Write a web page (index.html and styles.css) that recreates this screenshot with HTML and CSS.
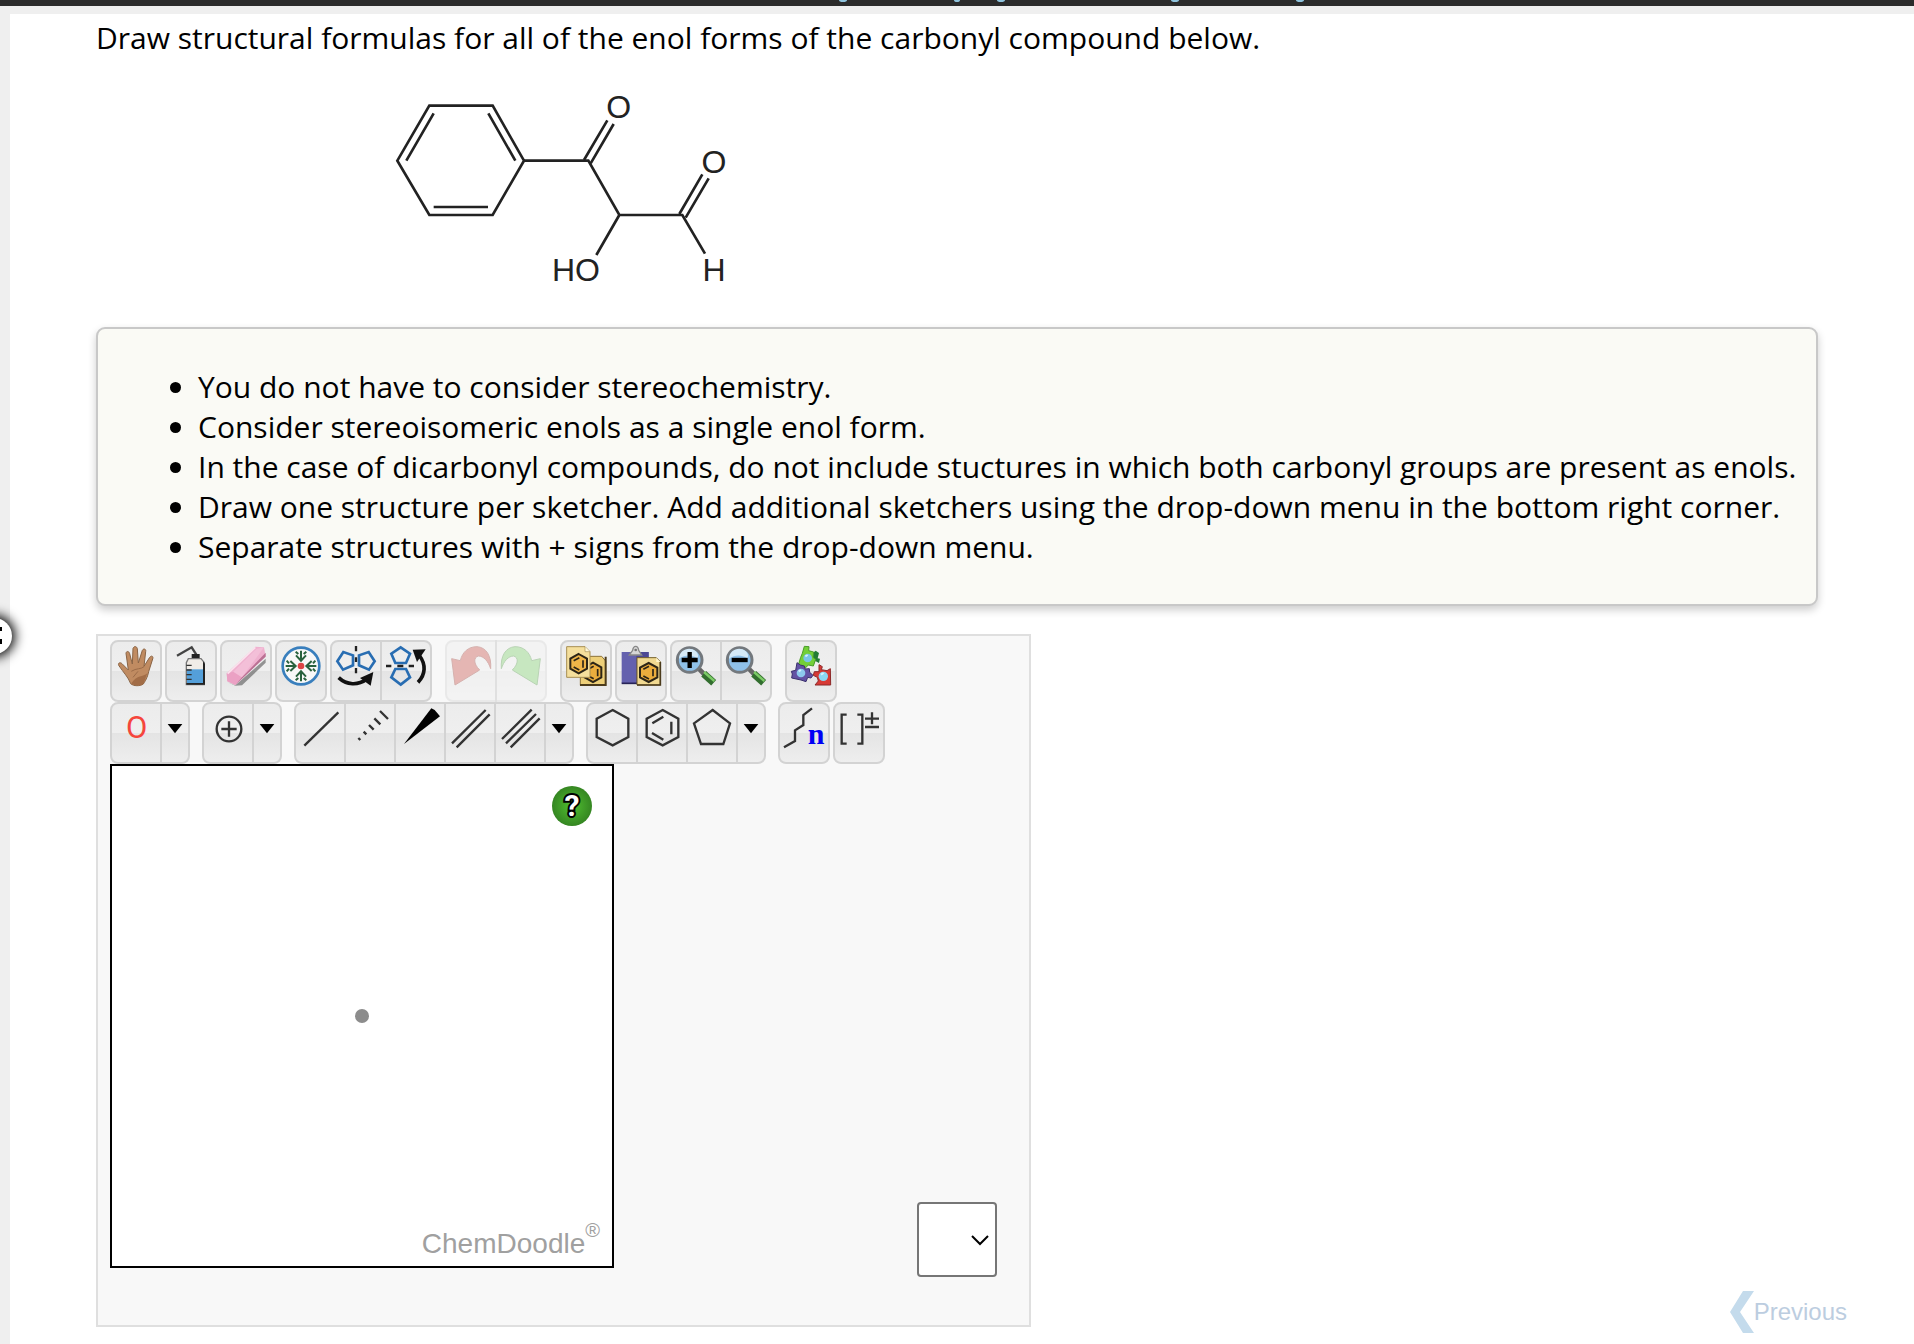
FILE: index.html
```html
<!DOCTYPE html>
<html lang="en">
<head>
    <meta charset="UTF-8">
    <meta name="viewport" content="width=device-width, initial-scale=1.0">
    <title>Enol forms</title>
    <link rel="stylesheet" href="styles.css">
</head>
<body>
    <header class="topbar">
        <svg width="1914" height="4" fill="#8fc3dd">
            <ellipse cx="843" cy="0" rx="4" ry="2"/>
            <ellipse cx="957" cy="0" rx="3" ry="2"/>
            <ellipse cx="1001" cy="0" rx="4" ry="2"/>
            <ellipse cx="1175" cy="0" rx="4" ry="2"/>
            <ellipse cx="1300" cy="0" rx="4" ry="2"/>
        </svg>
    </header>

    <button class="drawer-handle" aria-label="Open panel">
        <svg width="36" height="36"><path d="M20 9h6v4h-6zM20 21h6v5h-6z"/></svg>
    </button>

    <main class="page">
        <p class="question">Draw structural formulas for all of the enol forms of the carbonyl compound below.</p>

        <svg class="molecule" viewBox="0 0 1110 660" fill="none" stroke="#222" stroke-width="8">
            <path d="M148 77H338L432 242L338 405H148L52 242Z"/>
            <path d="M161 100L79 242M325 100L406 242M161 381H324"/>
            <path d="M432 242H625L718 405H907L975 521M718 405L649 525"/>
            <path d="M612 240L682 121M632 250L701 132M898 402L967 283M917 413L986 295"/>
            <g class="atom">
                <text x="716" y="115">O</text>
                <text x="1002" y="278">O</text>
                <text x="588" y="604">HO</text>
                <text x="1002" y="604">H</text>
            </g>
        </svg>

        <div class="notice">
            <ul>
                <li>You do not have to consider stereochemistry.</li>
                <li>Consider stereoisomeric enols as a single enol form.</li>
                <li>In the case of dicarbonyl compounds, do not include stuctures in which both carbonyl groups are present as enols.</li>
                <li>Draw one structure per sketcher. Add additional sketchers using the drop-down menu in the bottom right corner.</li>
                <li>Separate structures with + signs from the drop-down menu.</li>
            </ul>
        </div>

        <div class="answer">
            <section class="sketcher">
                <!-- top toolbar: edit tools -->
                <div class="toolbar toolbar-edit">
                    <div class="tools">
                        <button class="tool" aria-label="Move">
                            <svg class="icon" viewBox="0 0 120 120">
                                <path d="M44 113C36 92 24 82 8 58C5 50 13 48 18 53L37 72L30 22C31 14 39 15 41 23L49 54L51 7C54 0 62 0 64 8L67 51L79 13C83 6 91 9 89 17L84 61L101 34C107 27 113 31 110 39L98 77C94 96 88 104 82 114C72 121 53 121 44 113Z" fill="#c08b61" stroke="#8a6445" stroke-width="3"/>
                                <path d="M46 76C60 66 76 70 84 62M51 94L66 76" fill="none" stroke="#9c6c49" stroke-width="3"/>
                                <path d="M46 112C54 120 74 121 82 114L94 82C80 94 64 86 46 112Z" fill="#a26d47"/>
                            </svg>
                        </button>
                        <button class="tool" aria-label="Clear">
                            <svg class="icon" viewBox="0 0 120 120">
                                <path d="M18 29L62 4L76 26" fill="none" stroke="#444" stroke-width="7"/>
                                <path d="M62 24h24v14H62z" fill="#222"/>
                                <path d="M52 38h38l10 12v66H46V50z" fill="#f0ece7" stroke="#777" stroke-width="4"/>
                                <path d="M48 70h50v44H48z" fill="#549fd9"/>
                                <path d="M96 46l6 8v62H46v-5h50z" fill="#222"/>
                                <path d="M46 58h16M46 72h16M46 86h16M46 100h16" stroke="#333" stroke-width="4"/>
                            </svg>
                        </button>
                        <button class="tool" aria-label="Erase">
                            <svg class="icon" viewBox="0 0 120 120">
                                <path d="M4 108L28 118L119 38V50L48 118L28 119Z" fill="#555" opacity=".6"/>
                                <path d="M2 82L88 2L114 4L119 30L28 117L4 106Z" fill="#efb1cf"/>
                                <path d="M2 82L22 77L48 94L28 117L4 106Z" fill="#eba1c4"/>
                                <path d="M22 77L92 8L114 4L48 94Z" fill="#f3bfd8"/>
                                <path d="M48 94L119 20V32L28 117Z" fill="#bb7194"/>
                                <path d="M5 83L88 4" stroke="#fae2ed" stroke-width="5"/>
                            </svg>
                        </button>
                        <button class="tool" aria-label="Center">
                            <svg class="icon" viewBox="0 0 120 120">
                                <circle cx="60" cy="60" r="55" fill="#f8f8f8" stroke="#397fbd" stroke-width="8"/>
                                <g fill="none" stroke="#28613d" stroke-width="6">
                                    <path d="M60 14V42M45 28L60 44L75 28M44 17L52 24M76 17L68 24"/>
                                    <path d="M60 106V78M45 92L60 76L75 92M44 103L52 96M76 103L68 96"/>
                                    <path d="M14 60H42M28 45L44 60L28 75M17 44L24 52M17 76L24 68"/>
                                    <path d="M106 60H78M92 45L76 60L92 75M103 44L96 52M103 76L96 68"/>
                                </g>
                                <circle cx="60" cy="60" r="10" fill="#dc4444"/>
                            </svg>
                        </button>
                        <div class="tool-group">
                            <button class="tool" aria-label="Flip horizontally">
                                <svg class="icon" viewBox="0 0 120 120" fill="none">
                                    <path d="M4 46L22 18L51 28V58L21 71ZM116 46L98 18L69 28V58L99 71Z" stroke="#286db2" stroke-width="8"/>
                                    <path d="M60 0V16M60 34V48M60 66V82" stroke="#222" stroke-width="7"/>
                                    <path d="M8 95C32 118 66 119 92 100" stroke="#111" stroke-width="11"/>
                                    <path d="M72 96L112 78L104 119Z" fill="#111"/>
                                </svg>
                            </button>
                            <button class="tool" aria-label="Flip vertically">
                                <svg class="icon" viewBox="0 0 120 120" fill="none">
                                    <path d="M44 4L72 23L60 51H28L16 23ZM44 116L72 94L60 69H28L16 94Z" stroke="#286db2" stroke-width="8"/>
                                    <path d="M0 60H16M34 60H52M68 60H84" stroke="#222" stroke-width="7"/>
                                    <path d="M96 109C119 86 120 55 101 30" stroke="#111" stroke-width="11"/>
                                    <path d="M80 11L119 10L93 48Z" fill="#111"/>
                                </svg>
                            </button>
                        </div>
                    </div>
                    <div class="tool-group">
                        <button class="tool" disabled aria-label="Undo">
                            <svg class="icon" viewBox="0 0 120 120">
                                <path d="M2 38L28 44C34 18 52 2 78 2C106 4 122 30 119 68C112 46 98 30 82 30C68 34 66 52 86 72L12 117Z" fill="#c9564e" stroke="#a34841" stroke-width="3"/>
                            </svg>
                        </button>
                        <button class="tool" disabled aria-label="Redo">
                            <svg class="icon" viewBox="0 0 120 120">
                                <path d="M118 38L92 44C86 18 68 2 42 2C14 4-2 30 1 68C8 46 22 30 38 30C52 34 54 52 34 72L108 117Z" fill="#80cf6d" stroke="#5b9d50" stroke-width="3"/>
                            </svg>
                        </button>
                    </div>
                    <div class="tools">
                        <button class="tool" aria-label="Copy">
                            <svg class="icon" viewBox="0 0 120 120">
                                <path d="M43 31H107L119 45V118H43Z" fill="#edcf79" stroke="#8c733a" stroke-width="3"/>
                                <path d="M42 117H119V32" fill="none" stroke="#4b3b1c" stroke-width="6"/>
                                <path d="M81 50L106 64V94L81 108L56 94V64Z" fill="#ebad3d" stroke="#2c2517" stroke-width="6"/>
                                <path d="M95 69V91M66 70L83 61M66 89L83 98" stroke="#2c2517" stroke-width="5"/>
                                <path d="M2 2H57L72 17V94H2Z" fill="#f5df9c" stroke="#a88f53" stroke-width="3"/>
                                <path d="M57 2V17H72" fill="#fff8d8" stroke="#a88f53" stroke-width="2"/>
                                <path d="M38 24L63 38V68L38 82L13 68V38Z" fill="#efb548" stroke="#2c2517" stroke-width="6"/>
                                <path d="M51 43V65M23 44L40 35M23 63L40 72" stroke="#2c2517" stroke-width="5"/>
                            </svg>
                        </button>
                        <button class="tool" aria-label="Paste">
                            <svg class="icon" viewBox="0 0 120 120">
                                <path d="M2 18H83V112H2Z" fill="#6461ae"/>
                                <path d="M46 18H83V112H46Z" fill="#4d4894"/>
                                <path d="M2 112H83" stroke="#282457" stroke-width="5"/>
                                <path d="M25 27L35 13C37-3 51-3 53 13L62 27Z" fill="#d6d6d6" stroke="#888" stroke-width="4"/>
                                <circle cx="44" cy="12" r="4" fill="#777"/>
                                <path d="M48 35H106L118 47V117H48Z" fill="#f1d991" stroke="#756029" stroke-width="3"/>
                                <path d="M106 35V48H118" fill="#fff5cb"/>
                                <path d="M48 117H118V48" fill="none" stroke="#4b3b1c" stroke-width="5"/>
                                <path d="M83 51L109 65V94L83 108L57 94V65Z" fill="#ebad3d" stroke="#2c2517" stroke-width="6"/>
                                <path d="M96 69V91M67 70L84 61M67 90L84 99" stroke="#2c2517" stroke-width="5"/>
                            </svg>
                        </button>
                        <div class="tool-group">
                            <button class="tool" aria-label="Zoom in">
                                <svg class="icon" viewBox="0 0 120 120">
                                    <path d="M68 68L87 87" stroke="#666" stroke-width="14"/>
                                    <path d="M83 83L113 110" stroke="#326e2e" stroke-width="22"/>
                                    <path d="M84 78L115 105" stroke="#7ccb66" stroke-width="7"/>
                                    <circle cx="41" cy="42" r="37" fill="#8fc1ea" stroke="#73787d" stroke-width="9"/>
                                    <path d="M9 38C10 14 32 4 50 10C70 20 67 33 64 37C45 25 27 26 9 38Z" fill="#d5eaf8"/>
                                    <path d="M41 18V66M17 42H65" stroke="#000" stroke-width="13"/>
                                </svg>
                            </button>
                            <button class="tool" aria-label="Zoom out">
                                <svg class="icon" viewBox="0 0 120 120">
                                    <path d="M68 68L87 87" stroke="#666" stroke-width="14"/>
                                    <path d="M83 83L113 110" stroke="#326e2e" stroke-width="22"/>
                                    <path d="M84 78L115 105" stroke="#7ccb66" stroke-width="7"/>
                                    <circle cx="41" cy="42" r="37" fill="#8fc1ea" stroke="#73787d" stroke-width="9"/>
                                    <path d="M9 38C10 14 32 4 50 10C70 20 67 33 64 37C45 25 27 26 9 38Z" fill="#d5eaf8"/>
                                    <path d="M17 42H65" stroke="#000" stroke-width="13"/>
                                </svg>
                            </button>
                        </div>
                    </div>
                    <button class="tool" aria-label="Templates">
                        <svg class="icon" viewBox="0 0 120 120">
                            <path d="M54 14L66 20L74 14L84 21L80 37L87 38L84 51L73 45L67 58L54 54Z" fill="#237c35"/>
                            <path d="M40 1L54 2L53 14L68 18L66 34L74 40L67 60L52 57L43 66L35 60L22 57L29 34L34 22Z" fill="#73cf38" stroke="#4b9d2b" stroke-width="3"/>
                            <path d="M18 50L28 57L40 60L42 69L55 68L56 79L66 88L60 96L50 94L45 107L30 102L2 96L4 84L1 76L14 73Z" fill="#6352a4" stroke="#3b316d" stroke-width="3"/>
                            <path d="M84 56L94 62L91 71L108 74L118 68L119 117H72L82 105L79 94L67 88L70 77L84 77Z" fill="#d73a35" stroke="#8c2929" stroke-width="3"/>
                            <circle cx="50" cy="36" r="13" fill="#79c4e7"/>
                            <circle cx="30" cy="81" r="13" fill="#8dc9ed"/>
                            <circle cx="97" cy="91" r="14" fill="#8bd7f3"/>
                            <path d="M43 31l7-4M23 76l7-4M90 86l8-5" stroke="#d4f1ff" stroke-width="6"/>
                        </svg>
                    </button>
                </div>

                <!-- second toolbar: atoms, bonds and rings -->
                <div class="toolbar">
                    <div class="tool-group">
                        <button class="tool" aria-label="Oxygen">
                            <svg class="icon" viewBox="0 0 120 120"><text class="element" x="62" y="90">O</text></svg>
                        </button>
                        <button class="tool more" aria-label="More elements"><svg class="caret" viewBox="0 0 48 120"><path d="M2 48H46L24 76Z"/></svg></button>
                    </div>
                    <div class="tool-group">
                        <button class="tool" aria-label="Increase charge">
                            <svg class="icon line" viewBox="0 0 120 120"><circle cx="63" cy="63" r="37"/><path d="M63 40V86M40 63H86"/></svg>
                        </button>
                        <button class="tool more" aria-label="More attributes"><svg class="caret" viewBox="0 0 48 120"><path d="M2 48H46L24 76Z"/></svg></button>
                    </div>
                    <div class="tool-group">
                        <button class="tool" aria-label="Single bond">
                            <svg class="icon line" viewBox="0 0 120 120"><path d="M13 113L115 13"/></svg>
                        </button>
                        <button class="tool" aria-label="Recessed bond">
                            <svg class="icon line" viewBox="0 0 120 120"><path d="M25 90L31 96M41 71L49 79M57 51L71 65M73 31L91 49M90 9L114 33"/></svg>
                        </button>
                        <button class="tool" aria-label="Protruding bond">
                            <svg class="icon" viewBox="0 0 120 120"><path d="M12 108L94 1L104 6L120 25Z"/></svg>
                        </button>
                        <button class="tool" aria-label="Double bond">
                            <svg class="icon line" viewBox="0 0 120 120"><path d="M6 106L107 6M20 118L119 19"/></svg>
                        </button>
                        <button class="tool" aria-label="Triple bond">
                            <svg class="icon line" viewBox="0 0 120 120"><path d="M6 93L95 5M18 106L108 18M32 118L119 31"/></svg>
                        </button>
                        <button class="tool more" aria-label="More bonds"><svg class="caret" viewBox="0 0 48 120"><path d="M2 48H46L24 76Z"/></svg></button>
                    </div>
                    <div class="tool-group">
                        <button class="tool" aria-label="Cyclohexane">
                            <svg class="icon line" viewBox="0 0 120 120"><path d="M62 6L109 32V87L62 112L14 87V32Z"/></svg>
                        </button>
                        <button class="tool" aria-label="Benzene">
                            <svg class="icon line" viewBox="0 0 120 120"><path d="M62 6L109 32V87L62 112L14 87V32ZM31 46L64 26M88 41V79M30 75L64 95"/></svg>
                        </button>
                        <button class="tool" aria-label="Cyclopentane">
                            <svg class="icon line" viewBox="0 0 120 120"><path d="M62 6L114 46L94 108H27L6 46Z"/></svg>
                        </button>
                        <button class="tool more" aria-label="More rings"><svg class="caret" viewBox="0 0 48 120"><path d="M2 48H46L24 76Z"/></svg></button>
                    </div>
                    <div class="tools">
                        <button class="tool" aria-label="Chain">
                            <svg class="icon line" viewBox="0 0 120 120"><path d="M0 118L33 99V67L58 51V21L84 1"/><text class="repeat" x="71" y="108">n</text></svg>
                        </button>
                        <button class="tool" aria-label="Bracket">
                            <svg class="icon line" viewBox="0 0 120 120"><path d="M23 20H8V107H23M55 20H70V107H55M78 32H120M99 13V49M78 57H120"/></svg>
                        </button>
                    </div>
                </div>

                <div class="workspace">
                    <div class="canvas">
                        <button class="help" aria-label="Help">?</button>
                        <span class="start-atom"></span>
                        <span class="brand">ChemDoodle<sup>®</sup></span>
                    </div>
                    <div class="operator">
                        <select aria-label="Add sketcher">
                            <option></option>
                            <option>+</option>
                        </select>
                        <svg class="chevron" viewBox="0 0 18 12"><path d="M1 2L9 10L17 2"/></svg>
                    </div>
                </div>
            </section>

            <a class="previous" href="#">
                <svg width="24" height="42" viewBox="0 0 24 42"><path d="M13 0H24L10 21L24 42H13L0 21Z" fill="#c4dbec"/></svg>
                <span>Previous</span>
            </a>
        </div>
    </main>
</body>
</html>
```

FILE: styles.css
```css
* {
    box-sizing: border-box;
}
body {
    margin: 0;
    min-height: 100vh;
    display: flex;
    flex-direction: column;
    background: #efefef;
    color: #000;
    font-family: "Open Sans", sans-serif;
    font-size: 30px;
    line-height: 40px;
}
button {
    margin: 0;
    padding: 0;
    cursor: pointer;
}
svg {
    display: block;
}
.topbar {
    height: 6px;
    overflow: hidden;
    background: #2b2b2b;
}
.page {
    flex: 1;
    margin: 8px 0 0 10px;
    padding: 4px 67px 10px 86px;
    background: #fff;
}
.question {
    margin: 0;
}
.molecule {
    width: 370px;
    height: 220px;
    margin: 22px 0 27px 284px;
}
.atom {
    font-family: "Liberation Sans", Arial, sans-serif;
    font-size: 96px;
    text-anchor: middle;
    fill: #222;
    stroke: none;
}
.notice {
    margin: 0 29px 28px 0;
    padding: 38px 10px 37px;
    border: 2px solid #c8c8c8;
    border-radius: 9px;
    background: #fafaf5;
    box-shadow: 0 4px 8px rgba(0, 0, 0, 0.2);
}
.notice ul {
    margin: 0;
    padding-left: 90px;
}
.answer {
    display: flex;
    justify-content: space-between;
    align-items: flex-end;
}

/* floating handle on the left edge */
.drawer-handle {
    position: absolute;
    left: -24px;
    top: 618px;
    width: 36px;
    height: 36px;
    border: none;
    border-radius: 50%;
    background: #fff;
    box-shadow: 0 0 12px 3px #000;
}

/* sketcher */
.sketcher {
    width: 935px;
    margin-bottom: 6px;
    padding: 4px 32px 48px 12px;
    border: 2px solid #dfdfdf;
    background: #f8f8f8;
}
.toolbar {
    display: flex;
    gap: 12px;
}
.toolbar-edit {
    gap: 13px;
}
.tools {
    display: flex;
    gap: 3px;
}
.tool-group {
    display: flex;
}
.tool {
    width: 52px;
    height: 62px;
    padding: 4px;
    display: flex;
    justify-content: center;
    align-items: flex-start;
    border: 2px solid #d3d3d3;
    border-radius: 8px;
    background: linear-gradient(#ececec, #efefef 50%, #e4e4e4 50%, #eeeeee);
}
.tool-group .tool + .tool {
    margin-left: -2px;
    border-top-left-radius: 0;
    border-bottom-left-radius: 0;
}
.tool-group .tool:not(:last-child) {
    border-top-right-radius: 0;
    border-bottom-right-radius: 0;
}
.tool:hover {
    border-color: #999;
}
.tool:disabled {
    opacity: 0.4;
}
.more {
    width: 30px;
}
.icon {
    width: 40px;
    height: 40px;
    flex: none;
    overflow: visible;
}
.caret {
    width: 16px;
    height: 40px;
    flex: none;
}
.line {
    fill: none;
    stroke: #333;
    stroke-width: 7;
}
.element {
    font-family: Roboto, sans-serif;
    font-size: 93px;
    text-anchor: middle;
    fill: #f5463c;
}
.repeat {
    font-family: "Liberation Serif", "Times New Roman", serif;
    font-size: 90px;
    font-weight: bold;
    fill: #0000f5;
    stroke: none;
}
.workspace {
    display: flex;
    justify-content: space-between;
    align-items: flex-end;
}
.canvas {
    position: relative;
    width: 504px;
    height: 504px;
    margin-bottom: 9px;
    padding: 20px 12px 6px;
    display: flex;
    flex-direction: column;
    justify-content: space-between;
    align-items: flex-end;
    border: 2px solid #000;
    background: #fff;
}
.help {
    width: 40px;
    height: 40px;
    margin-right: 8px;
    border: none;
    border-radius: 50%;
    background: radial-gradient(#50c030, #2a6e1c);
    color: #fff;
    font-family: Roboto, sans-serif;
    font-size: 30px;
    font-weight: bold;
    line-height: 40px;
    -webkit-text-stroke: 4px #000;
    paint-order: stroke fill;
}
.start-atom {
    position: absolute;
    top: 50%;
    left: 50%;
    width: 14px;
    height: 14px;
    margin: -7px;
    border-radius: 50%;
    background: #8c8c8c;
}
.brand {
    display: flex;
    color: #a0a0a0;
    font-family: "Liberation Sans", Arial, sans-serif;
    font-size: 28px;
    line-height: 32px;
}
.brand sup {
    font-size: 20px;
    line-height: 4px;
}
.operator {
    position: relative;
}
.operator select {
    display: block;
    width: 80px;
    height: 75px;
    border: 2px solid #767676;
    border-radius: 4px;
    background: #fff;
    font-size: 30px;
    appearance: none;
}
.chevron {
    position: absolute;
    top: 32px;
    right: 8px;
    width: 18px;
    height: 12px;
    fill: none;
    stroke: #000;
    stroke-width: 2;
    pointer-events: none;
}

.previous {
    display: flex;
    align-items: center;
    color: #bccde0;
    font-family: "Liberation Sans", Arial, sans-serif;
    font-size: 24px;
    line-height: 40px;
    text-decoration: none;
}
```
